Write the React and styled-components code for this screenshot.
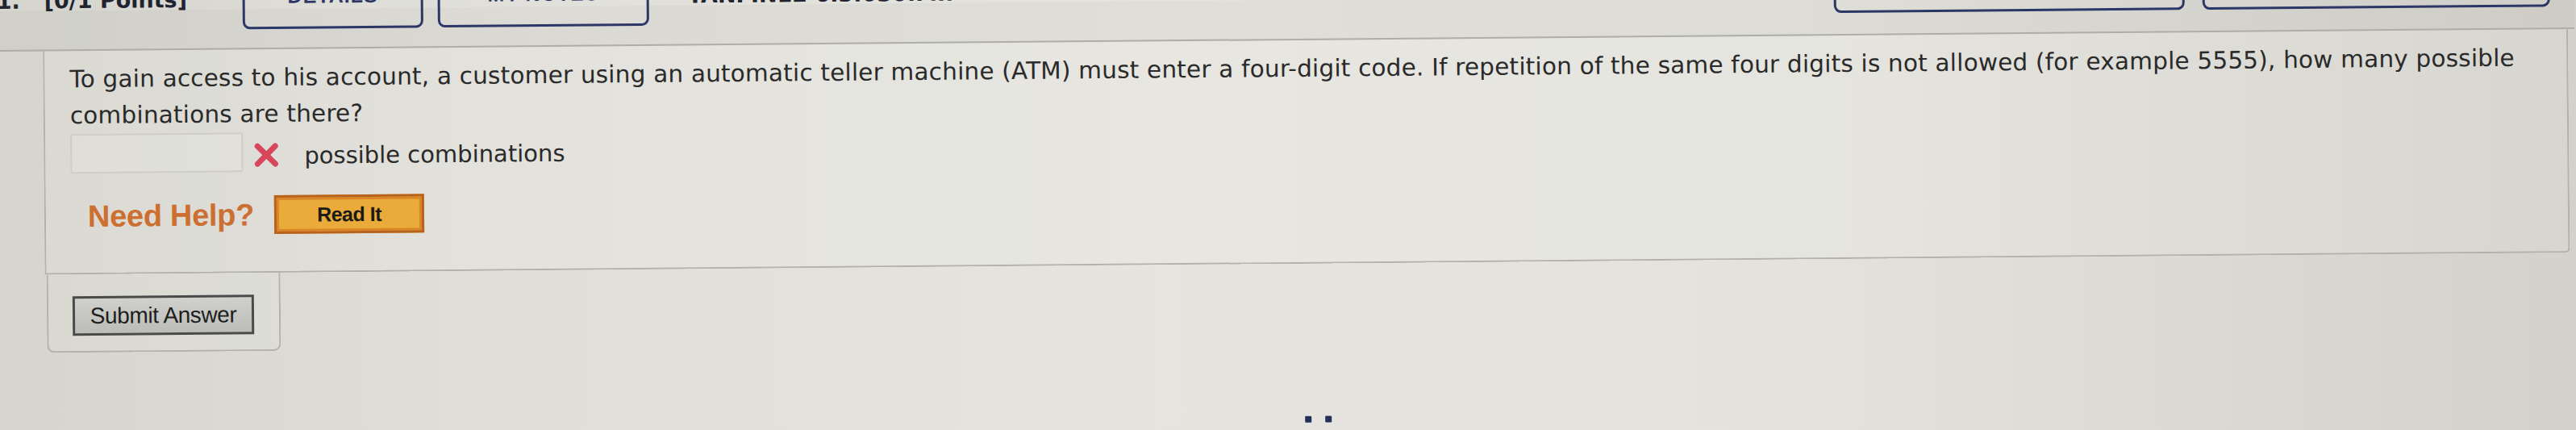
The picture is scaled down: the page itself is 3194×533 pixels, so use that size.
import React from "react";
import styled, { createGlobalStyle } from "styled-components";

const GlobalStyle = createGlobalStyle`
  html, body {
    margin: 0;
    padding: 0;
    width: 3194px;
    height: 533px;
    overflow: hidden;
    background: linear-gradient(90deg, #d5d4cd 0%, #dfded8 18%, #e5e4de 45%, #e3e2dc 70%, #d3d1ca 100%);
    font-family: "DejaVu Sans", Verdana, sans-serif;
  }
  * { box-sizing: border-box; }
`;

const Page = styled.div`
  width: 3194px;
  height: 533px;
  transform: rotate(-0.5deg);
  transform-origin: 50% 50%;
  display: flex;
  flex-direction: column;
`;

const Header = styled.div`
  height: 50px;
  display: flex;
  align-items: flex-end;
  padding: 0 30px 23px 0;
  border-bottom: 2px solid #aeada6;
  background: rgba(0, 0, 0, 0.025);
`;

const HeadText = styled.span`
  font-family: "DejaVu Sans", Verdana, sans-serif;
  font-weight: bold;
  font-size: 27px;
  line-height: 27px;
  color: #1f2430;
  margin-bottom: 24px;
  margin-left: ${(p) => p.$ml || 0}px;
  width: ${(p) => (p.$w ? `${p.$w}px` : "auto")};
  white-space: nowrap;
`;

const TabButton = styled.div`
  width: ${(p) => p.$w}px;
  height: ${(p) => p.$h || 72}px;
  margin-left: ${(p) => p.$ml}px;
  margin-bottom: ${(p) => p.$mb || 0}px;
  border: 3px solid #2d3767;
  border-radius: 9px;
  display: flex;
  justify-content: center;
  align-items: flex-start;
  padding-top: 16px;
  font-family: "Liberation Sans", Arial, sans-serif;
  font-weight: bold;
  font-size: 25px;
  line-height: 25px;
  letter-spacing: 1px;
  color: #2d3767;
  background: rgba(255, 255, 255, 0.06);
`;

const Spacer = styled.div`
  flex: 1;
`;

const Panel = styled.div`
  margin-left: 55px;
  width: 3131px;
  border: 2px solid #b3b1aa;
  border-top: none;
  border-radius: 0 0 6px 0;
  padding: 13px 40px 46px 31px;
  background: rgba(255, 255, 255, 0.1);
`;

const Question = styled.p`
  margin: 0;
  font-family: "DejaVu Sans", Verdana, sans-serif;
  font-size: 29.5px;
  line-height: 45px;
  letter-spacing: 0.2px;
  color: #2a2a2a;
`;

const AnswerRow = styled.div`
  display: flex;
  align-items: center;
  margin-top: 0;
`;

const AnswerInput = styled.div`
  width: 214px;
  height: 49px;
  border: 2px solid #cfcdc6;
  border-radius: 2px;
  background: rgba(255, 255, 255, 0.12);
`;

const WrongMark = styled.svg`
  width: 30px;
  height: 30px;
  margin-left: 14px;
  margin-top: 6px;
`;

const Unit = styled.span`
  margin-left: 32px;
  font-family: "DejaVu Sans", Verdana, sans-serif;
  font-size: 29px;
  color: #2a2a2a;
  margin-top: 8px;
`;

const HelpRow = styled.div`
  display: flex;
  align-items: center;
  margin-top: 29px;
  padding-left: 21px;
`;

const HelpLabel = styled.span`
  font-family: "Liberation Sans", Arial, sans-serif;
  font-weight: bold;
  font-size: 38px;
  color: #cc6f31;
  letter-spacing: -0.3px;
`;

const ReadIt = styled.div`
  margin-left: 25px;
  width: 186px;
  height: 48px;
  border: 3px solid #b7621f;
  background: #eaab3a;
  box-shadow: inset 0 0 0 3px #d88627;
  display: flex;
  align-items: center;
  justify-content: center;
  font-family: "Liberation Sans", Arial, sans-serif;
  font-weight: bold;
  font-size: 25px;
  color: #1b1a16;
  letter-spacing: -0.5px;
`;

const SubmitTab = styled.div`
  margin-left: 57px;
  width: 290px;
  height: 97px;
  border: 2px solid #b3b1aa;
  border-top: none;
  border-radius: 0 0 9px 9px;
  padding: 27px 0 0 30px;
  background: rgba(255, 255, 255, 0.08);
`;

const SubmitButton = styled.div`
  width: 225px;
  height: 49px;
  border: 3px solid #4a4a4a;
  background: linear-gradient(#d0d0cc, #bcbcb8);
  display: flex;
  align-items: center;
  justify-content: center;
  font-family: "Liberation Sans", Arial, sans-serif;
  font-size: 28px;
  color: #1e1e1e;
  letter-spacing: -0.4px;
`;

const BottomMarks = styled.div`
  display: flex;
  gap: 17px;
  margin: 92px 0 0 1616px;
`;

const Mark = styled.div`
  width: 8px;
  height: 8px;
  background: #243058;
  border-radius: 1px;
`;

export default function App() {
  return (
    <>
      <GlobalStyle />
      <Page>
        <Header>
          <HeadText $ml={-2} $w={30}>1.</HeadText>
          <HeadText $ml={29} $w={196}>[0/1 Points]</HeadText>
          <TabButton $w={224} $ml={50}>DETAILS</TabButton>
          <TabButton $w={262} $ml={18}>MY NOTES</TabButton>
          <HeadText $ml={48}>TANFIN12 6.3.030.MI.</HeadText>
          <Spacer />
          <TabButton $w={435} $ml={0} $h={90} $mb={3}>ASK YOUR TEACHER</TabButton>
          <TabButton $w={431} $ml={22} $h={90} $mb={3}>PRACTICE ANOTHER</TabButton>
        </Header>
        <Panel>
          <Question>
            To gain access to his account, a customer using an automatic teller machine (ATM) must
            enter a four-digit code. If repetition of the same four digits is not allowed (for
            example 5555), how many possible combinations are there?
          </Question>
          <AnswerRow>
            <AnswerInput />
            <WrongMark viewBox="0 0 30 30">
              <path d="M4 4 L26 26" stroke="#d8465b" strokeWidth="7" strokeLinecap="round" />
              <path d="M26 4 L4 26" stroke="#d8465b" strokeWidth="7" strokeLinecap="round" />
            </WrongMark>
            <Unit>possible combinations</Unit>
          </AnswerRow>
          <HelpRow>
            <HelpLabel>Need Help?</HelpLabel>
            <ReadIt>Read It</ReadIt>
          </HelpRow>
        </Panel>
        <SubmitTab>
          <SubmitButton>Submit Answer</SubmitButton>
        </SubmitTab>
        <BottomMarks>
          <Mark />
          <Mark />
        </BottomMarks>
      </Page>
    </>
  );
}
